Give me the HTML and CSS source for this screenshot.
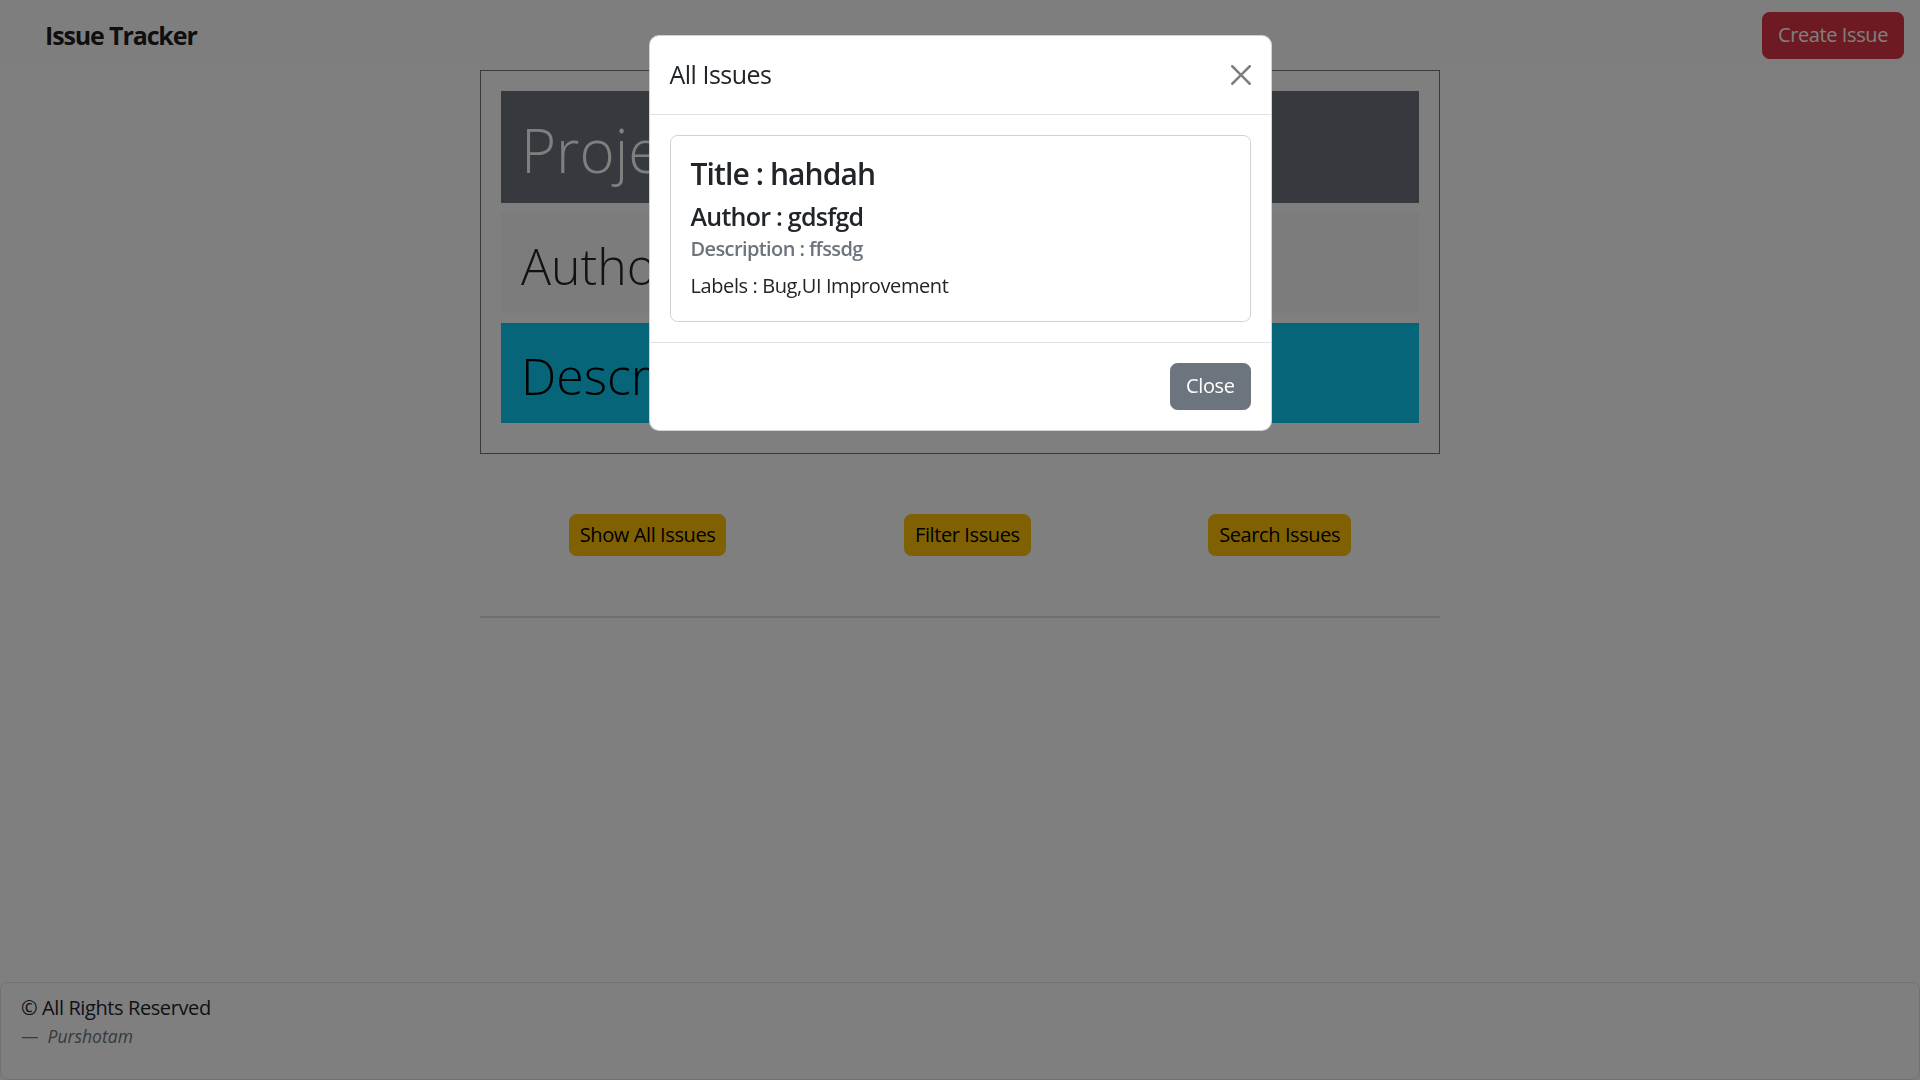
FILE: index.html
```html
<!DOCTYPE html>
<html lang="en">
<head>
<meta charset="utf-8">
<title>Issue Tracker</title>
<link rel="stylesheet" href="styles.css">
</head>
<body>
  <nav class="navbar">
    <span class="brand">Issue Tracker</span>
    <button class="btn btn-danger" type="button">Create Issue</button>
  </nav>

  <main class="main">
    <section class="project-box">
      <div class="panel panel-dark"><h1 class="panel-heading">Project : Issue Tracker</h1></div>
      <div class="panel panel-light"><h2 class="panel-heading">Author : Purshotam</h2></div>
      <div class="panel panel-info"><h2 class="panel-heading">Description : Track issues</h2></div>
    </section>

    <div class="actions">
      <button class="btn btn-warning" type="button">Show All Issues</button>
      <button class="btn btn-warning" type="button">Filter Issues</button>
      <button class="btn btn-warning" type="button">Search Issues</button>
    </div>

    <hr class="divider">
  </main>

  <footer class="site-footer">
    <p class="footer-text">© All Rights Reserved</p>
    <p class="quote-by"><cite class="quote-name">Purshotam</cite></p>
  </footer>

  <div class="backdrop"></div>

  <div class="modal-wrap">
    <div class="modal">
      <div class="modal-header">
        <h5 class="modal-title">All Issues</h5>
        <button class="btn-close" type="button" aria-label="Close">
          <svg class="close-icon" viewBox="0 0 16 16" width="20" height="20"><path d="M.293.293a1 1 0 0 1 1.414 0L8 6.586 14.293.293a1 1 0 1 1 1.414 1.414L9.414 8l6.293 6.293a1 1 0 0 1-1.414 1.414L8 9.414l-6.293 6.293a1 1 0 0 1-1.414-1.414L6.586 8 .293 1.707a1 1 0 0 1 0-1.414z"/></svg>
        </button>
      </div>
      <div class="modal-body">
        <div class="issue-card">
          <h4 class="issue-title">Title : hahdah</h4>
          <h5 class="issue-author">Author : gdsfgd</h5>
          <h6 class="issue-desc">Description : ffssdg</h6>
          <p class="issue-labels">Labels : Bug,UI Improvement</p>
        </div>
      </div>
      <div class="modal-footer">
        <button class="btn btn-secondary" type="button">Close</button>
      </div>
    </div>
  </div>
</body>
</html>
```

FILE: styles.css
```css
* { box-sizing: border-box; }

html, body { margin: 0; }

body {
  font-family: "Open Sans", Lato, "Noto Sans", sans-serif;
  font-size: 20px;
  line-height: 1.5;
  color: #212529;
  background: #fff;
  min-height: 100vh;
  display: flex;
  flex-direction: column;
}

.navbar {
  height: 70px;
  flex: none;
  display: flex;
  align-items: center;
  justify-content: space-between;
  padding: 2px 16px 0 45px;
  background: #fcfcfc;
}

.brand {
  font-size: 25px;
  font-weight: 700;
  color: rgba(0, 0, 0, .9);
  letter-spacing: -0.045em;
}

.btn {
  font-family: inherit;
  font-size: 20px;
  line-height: 1.5;
  padding: 7.5px 15px;
  border: 1px solid transparent;
  border-radius: 7.5px;
  cursor: pointer;
  letter-spacing: -0.02em;
}

.navbar .btn { margin-top: -2px; }

.btn-danger { background: #dc3545; border-color: #dc3545; color: #fff; }
.btn-secondary { background: #6c757d; border-color: #6c757d; color: #fff; margin: 5px; }
.btn-warning { background: #ffc107; border-color: #ffc107; color: #000; padding: 5px 10px; }

.main {
  width: 960px;
  margin: 0 auto;
  flex: none;
}

.project-box {
  border: 1px solid #6c757d;
  padding: 20px 20px 20px;
}

.panel {
  padding: 23px 20px 17px;
  margin-bottom: 10px;
  white-space: nowrap;
  overflow: hidden;
}

.panel-heading {
  margin: 0;
  font-size: 50px;
  font-weight: 300;
  line-height: 1.2;
}

.panel-dark { background: #6c757d; color: #fff; }
.panel-dark .panel-heading { font-size: 60px; }
.panel-light { background: #f8f9fa; color: #212529; }
.panel-info { background: #0dcaf0; color: #000; }

.actions {
  display: flex;
  justify-content: space-around;
  margin-top: 60px;
}

.divider {
  margin: 60px 0 0;
  border: 0;
  border-top: 2px solid #dcdcdc;
}

.site-footer {
  margin-top: auto;
  flex: none;
  border: 1px solid #dee2e6;
  border-radius: 7.5px;
  padding: 10px 20px 30px;
  background: #fff;
}

.footer-text { margin: 0; letter-spacing: -0.02em; }

.quote-by {
  margin: 0;
  font-size: 17.5px;
  color: #6c757d;
}

.quote-by::before { content: "\2014\00A0\00A0"; }

.quote-name { font-style: italic; }

.backdrop {
  position: fixed;
  inset: 0;
  background: rgba(0, 0, 0, .5);
}

.modal-wrap {
  position: fixed;
  inset: 0;
  padding-top: 35px;
}

.modal {
  width: 623px;
  margin: 0 auto;
  background: #fff;
  border: 1px solid rgba(0, 0, 0, .175);
  border-radius: 10px;
}

.modal-header {
  display: flex;
  align-items: center;
  justify-content: space-between;
  padding: 20px;
  border-bottom: 1px solid #dee2e6;
}

.modal-title {
  margin: 0;
  font-size: 25px;
  font-weight: 500;
  line-height: 1.5;
  letter-spacing: -0.02em;
}

.btn-close {
  background: none;
  border: 0;
  padding: 0;
  width: 20px;
  height: 20px;
  display: flex;
  cursor: pointer;
}

.close-icon { fill: #000; opacity: .5; }

.modal-body { padding: 20px; }

.issue-card {
  border: 1px solid rgba(0, 0, 0, .175);
  border-radius: 7.5px;
  padding: 17px 20px 20px;
  letter-spacing: -0.02em;
}

.issue-title {
  margin: 0 0 4.5px;
  font-size: 30px;
  font-weight: 600;
  line-height: 42px;
  letter-spacing: -0.03em;
}

.issue-author {
  margin: 0 0 0.5px;
  font-size: 25px;
  font-weight: 600;
  line-height: 35px;
  letter-spacing: -0.03em;
}

.issue-desc {
  margin: 0 0 8px;
  font-size: 20px;
  font-weight: 600;
  line-height: 28px;
  color: #6c757d;
  letter-spacing: -0.03em;
}

.issue-labels { margin: 0; }

.modal-footer {
  display: flex;
  justify-content: flex-end;
  padding: 15px;
  border-top: 1px solid #dee2e6;
}
```
